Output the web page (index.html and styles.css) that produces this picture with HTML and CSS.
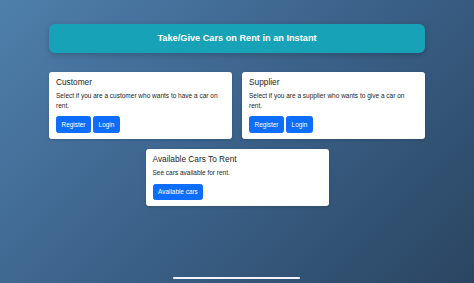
FILE: index.html
```html
<!DOCTYPE html>
<html lang="en">
<head>
  <meta charset="UTF-8">
  <title>Car Rental</title>
  <link rel="stylesheet" href="styles.css">
</head>
<body>
  <div class="page">
    <h1 class="banner">Take/Give Cars on Rent in an Instant</h1>

    <div class="row">
      <div class="card">
        <h5 class="card-title">Customer</h5>
        <p class="card-text">Select if you are a customer who wants to have a car on rent.</p>
        <div class="actions">
          <a class="btn" href="#">Register</a>
          <a class="btn" href="#">Login</a>
        </div>
      </div>
      <div class="card">
        <h5 class="card-title">Supplier</h5>
        <p class="card-text">Select if you are a supplier who wants to give a car on rent.</p>
        <div class="actions">
          <a class="btn" href="#">Register</a>
          <a class="btn" href="#">Login</a>
        </div>
      </div>
    </div>

    <div class="row center">
      <div class="card">
        <h5 class="card-title">Available Cars To Rent</h5>
        <p class="card-text">See cars available for rent.</p>
        <div class="actions">
          <a class="btn" href="#">Available cars</a>
        </div>
      </div>
    </div>
  </div>

  <!-- home indicator -->
  <div class="home-bar"></div>
</body>
</html>
```

FILE: styles.css
```css
html, body {
  margin: 0;
  height: 100%;
}

body {
  font-family: "Liberation Sans", Arial, sans-serif;
  font-size: 6.5px;
  line-height: 1.5;
  color: #212529;
  background: linear-gradient(135deg, #4e7fab 0%, #3b6189 50%, #2a4561 100%);
  position: relative;
  overflow: hidden;
}

.page {
  width: 376px;
  margin: 0 auto;
  padding-top: 24px;
}

.banner {
  margin: 0 0 19px;
  height: 29px;
  display: flex;
  align-items: center;
  justify-content: center;
  background-color: #17a2b8;
  color: #fff;
  font-size: 9.2px;
  font-weight: bold;
  border-radius: 6px;
  box-shadow: 0 2px 6px rgba(0, 0, 0, 0.2);
}

.row {
  display: flex;
  gap: 10px;
  margin-bottom: 10px;
}

.row.center {
  justify-content: center;
}

.card {
  width: 183px;
  box-sizing: border-box;
  background-color: #fff;
  border-radius: 3px;
  padding: 6px 7px;
  box-shadow: 0 1px 3px rgba(0, 0, 0, 0.15);
}

.card-title {
  margin: 0 0 3px;
  font-size: 8.3px;
  font-weight: 500;
  line-height: 1.2;
}

.card-text {
  margin: 0 0 6px;
}

.actions {
  display: flex;
  gap: 2px;
}

.btn {
  display: inline-block;
  padding: 2.4px 4.6px;
  font-size: 6.4px;
  line-height: 1.5;
  color: #fff;
  background-color: #0d6efd;
  border: 0.4px solid #0d6efd;
  border-radius: 2.4px;
  text-decoration: none;
}

.home-bar {
  position: absolute;
  left: 173px;
  bottom: 4px;
  width: 127px;
  height: 2px;
  border-radius: 1px;
  background-color: #f2f5f8;
}
```
